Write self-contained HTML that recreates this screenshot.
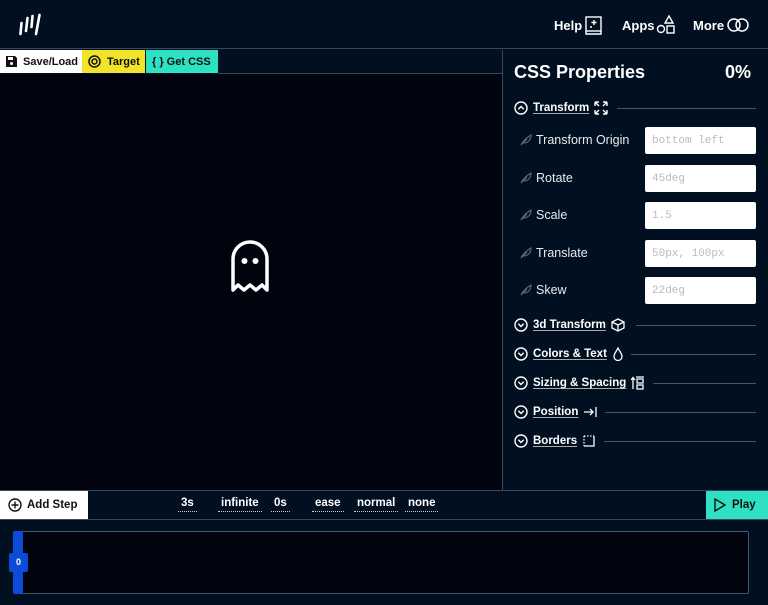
<!DOCTYPE html>
<html><head><meta charset="utf-8"><style>
*{box-sizing:border-box;margin:0;padding:0}
body{width:768px;height:605px;background:#011021;font-family:"Liberation Sans",sans-serif;color:#fff;position:relative;overflow:hidden}
.abs{position:absolute}
.hdr{left:0;top:0;width:768px;height:49px;border-bottom:1px solid #3b4656}
.nav{font-weight:bold;font-size:13px;top:18px}
.tab{top:50px;height:23px;font-size:11px;font-weight:bold;color:#111;display:flex;align-items:center;gap:6px;padding-left:6px}
.canvas{left:0;top:74px;width:502px;height:416px;background:#01040e}
.panel{left:502px;top:50px;width:266px;height:440px;border-left:1px solid #3b4656}
.row{left:519px;font-size:12.5px;color:#e8ebef;display:flex;align-items:center;gap:3px}
.inp{left:645px;width:111px;height:27px;background:#fff;border-radius:2px;font-family:"Liberation Mono",monospace;font-size:11px;color:#bbb;padding:8px 7px}
.sec{left:514px;font-size:11.5px;font-weight:bold;display:flex;align-items:center;gap:5px}
.sec u{text-decoration:underline;text-underline-offset:2px;text-decoration-color:#aaa}
.line{height:1px;background:#4a5463}
.bot{left:0;top:490px;width:768px;height:30px;border-top:1px solid #3b4656;border-bottom:1px solid #3b4656}
.opt{top:497px;font-size:11.5px;font-weight:bold;border-bottom:1px dotted #ccc;padding:0 3px 2px}
</style></head><body>
<div class="abs hdr"></div>
<svg class="abs" style="left:18px;top:12px" width="26" height="24" viewBox="0 0 26 24" stroke="#fff" stroke-width="2.6" stroke-linecap="round"><path d="M2.5 22L3.5 11M8 19L9.5 6M13.5 15L14.5 4M18 22L21.5 3"/></svg>
<div class="abs nav" style="left:554px">Help</div>
<svg class="abs" style="left:585px;top:16px" width="17" height="19" viewBox="0 0 17 19" fill="none" stroke="#fff" stroke-width="1.4"><rect x="1" y="1" width="15" height="14"/><path d="M1 15v3h15v-3M9 4v5M6.5 6.5h5M5 11h2"/></svg>
<div class="abs nav" style="left:622px">Apps</div>
<svg class="abs" style="left:656px;top:15px" width="20" height="20" viewBox="0 0 20 20" fill="none" stroke="#fff" stroke-width="1.4"><path d="M13 1L17 8H9Z"/><circle cx="5" cy="14" r="3.5"/><rect x="11" y="11" width="7" height="7"/></svg>
<div class="abs nav" style="left:693px">More</div>
<svg class="abs" style="left:727px;top:18px" width="22" height="14" viewBox="0 0 22 14" fill="none" stroke="#fff" stroke-width="1.5"><circle cx="7" cy="7" r="6"/><circle cx="15" cy="7" r="6"/></svg>

<div class="abs tab" style="left:0;width:82px;background:#fff"><svg width="11" height="11" viewBox="0 0 11 11"><path d="M0 0h9l2 2v9H0Z" fill="#111"/><rect x="2" y="1" width="5" height="3" fill="#fff"/><circle cx="5.5" cy="7.5" r="1.5" fill="#fff"/></svg>Save/Load</div>
<div class="abs tab" style="left:82px;width:63px;background:#f1e22a"><svg width="13" height="13"><circle cx="6.5" cy="6.5" r="5.5" fill="none" stroke="#111" stroke-width="1.5"/><circle cx="6.5" cy="6.5" r="2.5" fill="none" stroke="#111" stroke-width="1.5"/></svg>Target</div>
<div class="abs tab" style="left:146px;width:72px;background:#2de1c2">{ } Get CSS</div>
<div class="abs" style="left:218px;top:73px;width:284px;height:1px;background:#3b4656"></div>
<div class="abs canvas"></div>
<svg class="abs" style="left:230px;top:240px" width="40" height="52" viewBox="0 0 40 52"><path d="M3 50V19A17 17 0 0 1 37 19V50L32 45L26 50L20 45L14 50L8 45Z" fill="none" stroke="#fff" stroke-width="3.5" stroke-linejoin="round"/><circle cx="14.5" cy="21" r="3" fill="#fff"/><circle cx="25.5" cy="21" r="3" fill="#fff"/></svg>

<svg width="0" height="0" style="position:absolute"><defs>
<symbol id="cd" viewBox="0 0 14 14"><circle cx="7" cy="7" r="6" fill="none" stroke="#fff" stroke-width="1.4"/><path d="M4.3 5.8L7 8.5L9.7 5.8" fill="none" stroke="#fff" stroke-width="1.4"/></symbol>
<symbol id="cu" viewBox="0 0 14 14"><circle cx="7" cy="7" r="6" fill="none" stroke="#fff" stroke-width="1.4"/><path d="M4.3 8.2L7 5.5L9.7 8.2" fill="none" stroke="#fff" stroke-width="1.4"/></symbol>
<symbol id="fe" viewBox="0 0 14 14"><path d="M2 12C4 8 7 5 12 2C12 7 9 10 4 10M2 12L8 6" fill="none" stroke="#667" stroke-width="1.1"/></symbol>
</defs></svg>

<div class="abs panel"></div>
<div class="abs" style="left:514px;top:62px;font-size:18px;font-weight:bold">CSS Properties</div>
<div class="abs" style="left:725px;top:62px;font-size:18px;font-weight:bold">0%</div>
<div class="abs sec" style="top:101px"><svg width="14" height="14"><use href="#cu"/></svg><u>Transform</u> <svg width="14" height="14" viewBox="0 0 14 14" fill="none" stroke="#fff" stroke-width="1.4"><path d="M1 1l4 4M1 1v4M1 1h4M13 1l-4 4M13 1v4M13 1h-4M1 13l4-4M1 13v-4M1 13h4M13 13l-4-4M13 13v-4M13 13h-4"/></svg></div>
<div class="abs line" style="left:617px;top:108px;width:139px"></div>
<div class="abs row" style="top:133px"><svg width="14" height="14"><use href="#fe"/></svg> Transform Origin</div>
<div class="abs inp" style="top:127px">bottom left</div>
<div class="abs row" style="top:171px"><svg width="14" height="14"><use href="#fe"/></svg> Rotate</div>
<div class="abs inp" style="top:165px">45deg</div>
<div class="abs row" style="top:208px"><svg width="14" height="14"><use href="#fe"/></svg> Scale</div>
<div class="abs inp" style="top:202px">1.5</div>
<div class="abs row" style="top:246px"><svg width="14" height="14"><use href="#fe"/></svg> Translate</div>
<div class="abs inp" style="top:240px">50px, 100px</div>
<div class="abs row" style="top:283px"><svg width="14" height="14"><use href="#fe"/></svg> Skew</div>
<div class="abs inp" style="top:277px">22deg</div>
<div class="abs sec" style="top:318px"><svg width="14" height="14"><use href="#cd"/></svg><u>3d Transform</u> <svg width="14" height="14" viewBox="0 0 14 14" fill="none" stroke="#fff" stroke-width="1.3"><path d="M7 1L13 4V10L7 13L1 10V4ZM1 4L7 7L13 4M7 7V13"/></svg></div>
<div class="abs line" style="left:636px;top:325px;width:120px"></div>
<div class="abs sec" style="top:347px"><svg width="14" height="14"><use href="#cd"/></svg><u>Colors &amp; Text</u> <svg width="12" height="14" viewBox="0 0 12 14" fill="none" stroke="#fff" stroke-width="1.3"><path d="M6 1C4 5 2 7 2 9.5A4 4 0 0 0 10 9.5C10 7 8 5 6 1Z"/></svg></div>
<div class="abs line" style="left:631px;top:354px;width:125px"></div>
<div class="abs sec" style="top:376px"><svg width="14" height="14"><use href="#cd"/></svg><u>Sizing &amp; Spacing</u> <svg width="14" height="14" viewBox="0 0 14 14" fill="none" stroke="#fff" stroke-width="1.3"><path d="M2 13V2M0 4L2 1.5L4 4M5 1H13M6 3H12V7H6ZM6 9H12V13H6Z"/></svg></div>
<div class="abs line" style="left:653px;top:383px;width:103px"></div>
<div class="abs sec" style="top:405px"><svg width="14" height="14"><use href="#cd"/></svg><u>Position</u> <svg width="14" height="14" viewBox="0 0 14 14" fill="none" stroke="#fff" stroke-width="1.3"><path d="M1 7H10M7 4L10 7L7 10M13 2V12"/></svg></div>
<div class="abs line" style="left:605px;top:412px;width:151px"></div>
<div class="abs sec" style="top:434px"><svg width="14" height="14"><use href="#cd"/></svg><u>Borders</u> <svg width="14" height="14" viewBox="0 0 14 14" fill="none" stroke="#fff" stroke-width="1.3"><path d="M12 2V12H2"/><path d="M2 2H12M2 2V12" stroke-dasharray="1.5 1.5"/></svg></div>
<div class="abs line" style="left:604px;top:441px;width:152px"></div>

<div class="abs bot"></div>
<div class="abs" style="left:0;top:491px;width:88px;height:28px;background:#fff;color:#111;font-size:11.5px;font-weight:bold;display:flex;align-items:center;gap:5px;padding-left:8px"><svg width="14" height="14"><circle cx="7" cy="7" r="6" fill="none" stroke="#111" stroke-width="1.4"/><path d="M7 3.5v7M3.5 7h7" stroke="#111" stroke-width="1.4"/></svg>Add Step</div>
<div class="abs opt" style="left:178px">3s</div>
<div class="abs opt" style="left:218px">infinite</div>
<div class="abs opt" style="left:271px">0s</div>
<div class="abs opt" style="left:312px">ease</div>
<div class="abs opt" style="left:354px">normal</div>
<div class="abs opt" style="left:405px">none</div>
<div class="abs" style="left:706px;top:491px;width:62px;height:28px;background:#2de1c2;color:#111;font-size:11.5px;font-weight:bold;display:flex;align-items:center;gap:6px;padding-left:8px"><svg width="12" height="14"><path d="M1 1L11 7L1 13Z" fill="none" stroke="#111" stroke-width="1.4"/></svg>Play</div>
<div class="abs" style="left:13px;top:531px;width:736px;height:63px;background:#01040e;border:1px solid #4a5463;border-radius:2px"></div>
<div class="abs" style="left:13px;top:531px;width:10px;height:63px;background:#0b4bd8;border-radius:2px"></div>
<div class="abs" style="left:9px;top:553px;width:19px;height:19px;background:#0b4bd8;border-radius:2px;font-size:9px;font-weight:bold;text-align:center;line-height:19px">0</div>
</body></html>
